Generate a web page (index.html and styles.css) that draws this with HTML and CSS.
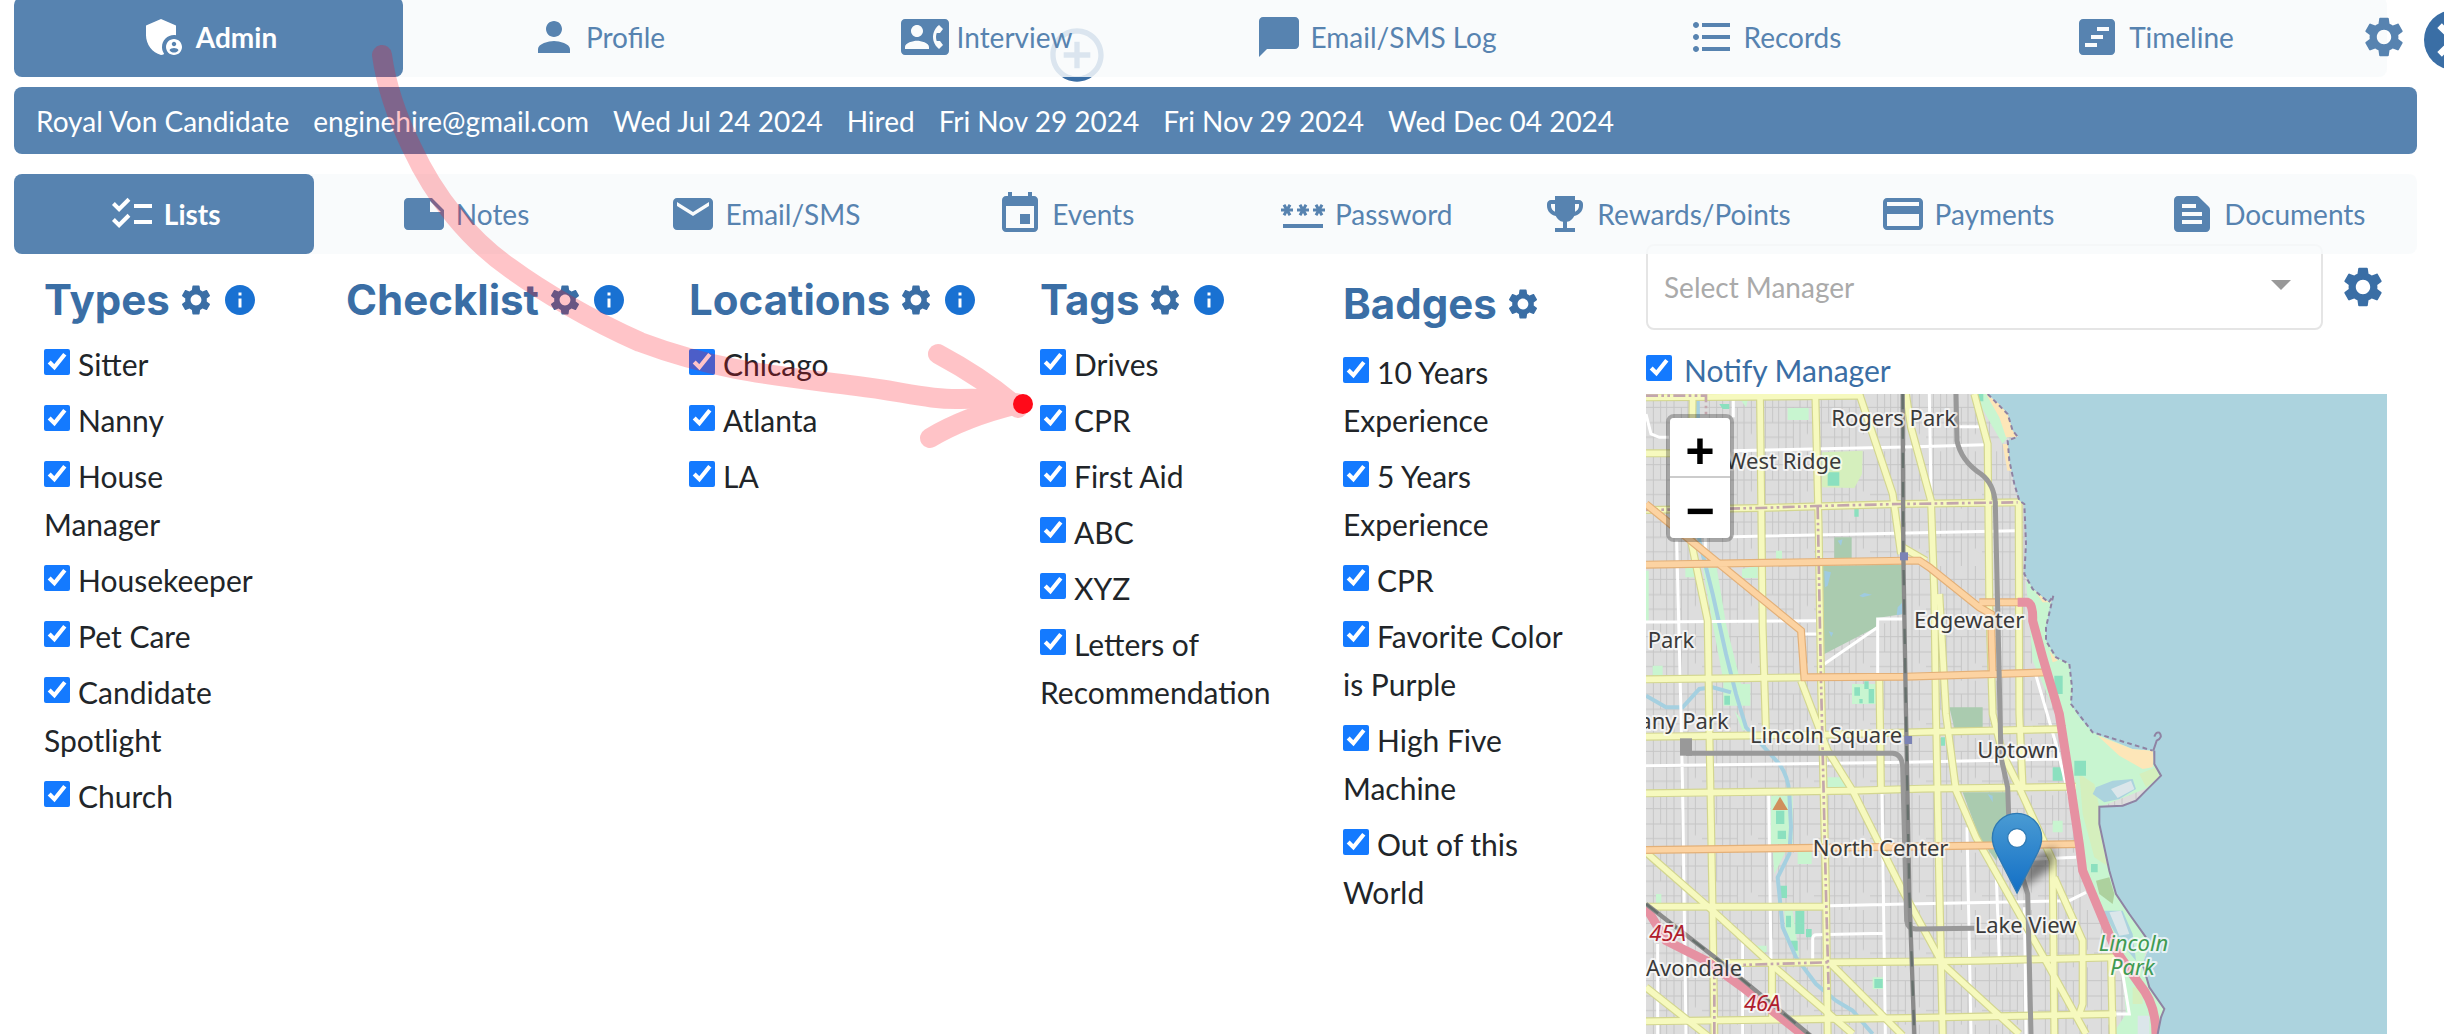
FILE: index.html
```
<!DOCTYPE html>
<html lang="en">
<head>
    <meta charset="UTF-8">
    <meta name="viewport" content="width=device-width, initial-scale=1.0">
    <title>Candidate Admin</title>
    <link rel="stylesheet" href="styles.css">
</head>
<body>
    <!-- icon sprite -->
    <svg class="sprite" aria-hidden="true">
        <symbol id="i-admin" viewBox="0 0 24 24"><path d="M17 11c.34 0 .67.04 1 .09V6.27L10.5 3 3 6.27v4.91c0 4.54 3.2 8.79 7.5 9.82.55-.13 1.08-.32 1.6-.55-.69-.98-1.1-2.17-1.1-3.45 0-3.31 2.69-6 6-6z"/><path d="M17 13c-2.21 0-4 1.79-4 4s1.79 4 4 4 4-1.79 4-4-1.79-4-4-4zm0 1.38c.62 0 1.12.51 1.12 1.12s-.51 1.12-1.12 1.12-1.12-.51-1.12-1.12.5-1.12 1.12-1.12zm0 5.37c-.93 0-1.74-.46-2.24-1.17.05-.72 1.51-1.08 2.24-1.08s2.19.36 2.24 1.08c-.5.71-1.31 1.17-2.24 1.17z"/></symbol>
        <symbol id="i-person" viewBox="0 0 24 24"><path d="M12 12c2.21 0 4-1.79 4-4s-1.79-4-4-4-4 1.79-4 4 1.79 4 4 4zm0 2c-2.67 0-8 1.34-8 4v2h16v-2c0-2.66-5.33-4-8-4z"/></symbol>
        <symbol id="i-contact" viewBox="0 0 24 24"><path d="M22 3H2C.9 3 0 3.9 0 5v14c0 1.1.9 2 2 2h20c1.1 0 1.99-.9 1.99-2L24 5c0-1.1-.9-2-2-2zM8 6c1.66 0 3 1.34 3 3s-1.34 3-3 3-3-1.34-3-3 1.34-3 3-3zm6 12H2v-1c0-2 4-3.1 6-3.1s6 1.1 6 3.1v1zm3.85-4h1.64L21 16l-1.99 1.99c-1.31-.98-2.28-2.38-2.73-3.99-.18-.64-.28-1.31-.28-2s.1-1.36.28-2c.45-1.62 1.42-3.01 2.73-3.99L21 8l-1.51 2h-1.64c-.22.63-.35 1.3-.35 2s.13 1.37.35 2z"/></symbol>
        <symbol id="i-chat" viewBox="0 0 24 24"><path d="M20 2H4c-1.1 0-2 .9-2 2v18l4-4h14c1.1 0 2-.9 2-2V4c0-1.1-.9-2-2-2z"/></symbol>
        <symbol id="i-records" viewBox="0 0 24 24"><path d="M4 10.5c-.83 0-1.5.67-1.5 1.5s.67 1.5 1.5 1.5 1.5-.67 1.5-1.5-.67-1.5-1.5-1.5zm0-6c-.83 0-1.5.67-1.5 1.5S3.17 7.5 4 7.5 5.5 6.83 5.5 6 4.83 4.5 4 4.5zm0 12c-.83 0-1.5.68-1.5 1.5s.68 1.5 1.5 1.5 1.5-.68 1.5-1.5-.67-1.5-1.5-1.5zM7 19h14v-2H7v2zm0-6h14v-2H7v2zm0-8v2h14V5H7z"/></symbol>
        <symbol id="i-timeline" viewBox="0 0 24 24"><path d="M19 3H5c-1.1 0-2 .9-2 2v14c0 1.1.9 2 2 2h14c1.1 0 2-.9 2-2V5c0-1.1-.9-2-2-2zm-7 14H6v-2h6v2zm3-4H9v-2h6v2zm3-4h-6V7h6v2z"/></symbol>
        <symbol id="i-gear" viewBox="0 0 24 24"><path d="M19.14 12.94c.04-.3.06-.61.06-.94 0-.32-.02-.64-.07-.94l2.03-1.58c.18-.14.23-.41.12-.61l-1.92-3.32c-.12-.22-.37-.29-.59-.22l-2.39.96c-.5-.38-1.03-.7-1.62-.94l-.36-2.54c-.04-.24-.24-.41-.48-.41h-3.84c-.24 0-.43.17-.47.41l-.36 2.54c-.59.24-1.13.57-1.62.94l-2.39-.96c-.22-.08-.47 0-.59.22L2.74 8.87c-.12.21-.08.47.12.61l2.03 1.58c-.05.3-.09.63-.09.94s.02.64.07.94l-2.03 1.58c-.18.14-.23.41-.12.61l1.92 3.32c.12.22.37.29.59.22l2.39-.96c.5.38 1.03.7 1.62.94l.36 2.54c.05.24.24.41.48.41h3.84c.24 0 .44-.17.47-.41l.36-2.54c.59-.24 1.13-.56 1.62-.94l2.39.96c.22.08.47 0 .59-.22l1.92-3.32c.12-.22.07-.47-.12-.61l-2.01-1.58zM12 15.6c-1.98 0-3.6-1.62-3.6-3.6s1.62-3.6 3.6-3.6 3.6 1.62 3.6 3.6-1.62 3.6-3.6 3.6z"/></symbol>
        <symbol id="i-checklist" viewBox="0 0 24 24"><path d="M22 7h-9v2h9V7zm0 8h-9v2h9v-2zM5.54 11 2 7.46l1.41-1.41 2.12 2.12 4.24-4.24 1.41 1.41L5.54 11zm0 8L2 15.46l1.41-1.41 2.12 2.12 4.24-4.24 1.41 1.41L5.54 19z"/></symbol>
        <symbol id="i-note" viewBox="0 0 24 24"><path d="M22 10l-6-6H4c-1.1 0-2 .9-2 2v12.01c0 1.1.9 1.99 2 1.99l16-.01c1.1 0 2-.89 2-1.99v-8zm-7-4.5l5.5 5.5H15V5.5z"/></symbol>
        <symbol id="i-email" viewBox="0 0 24 24"><path d="M20 4H4c-1.1 0-1.99.9-1.99 2L2 18c0 1.1.9 2 2 2h16c1.1 0 2-.9 2-2V6c0-1.1-.9-2-2-2zm0 4l-8 5-8-5V6l8 5 8-5v2z"/></symbol>
        <symbol id="i-event" viewBox="0 0 24 24"><path d="M17 12h-5v5h5v-5zM16 1v2H8V1H6v2H5c-1.11 0-1.99.9-1.99 2L3 19c0 1.1.89 2 2 2h14c1.1 0 2-.9 2-2V5c0-1.1-.9-2-2-2h-1V1h-2zm3 18H5V8h14v11z"/></symbol>
        <symbol id="i-password" viewBox="0 0 24 24"><path d="M2 17h20v2H2v-2zm1.15-4.05L4 11.47l.85 1.48 1.3-.75-.85-1.48H7v-1.5H5.3l.85-1.47L4.85 7 4 8.47 3.15 7l-1.3.75.85 1.47H1v1.5h1.7l-.85 1.48 1.3.75zm6.7-.75 1.3.75.85-1.48.85 1.48 1.3-.75-.85-1.48H15v-1.5h-1.7l.85-1.47-1.3-.75L12 8.47 11.15 7l-1.3.75.85 1.47H9v1.5h1.7l-.85 1.48zM23 9.22h-1.7l.85-1.47-1.3-.75L20 8.47 19.15 7l-1.3.75.85 1.47H17v1.5h1.7l-.85 1.48 1.3.75.85-1.48.85 1.48 1.3-.75-.85-1.48H23v-1.5z"/></symbol>
        <symbol id="i-trophy" viewBox="0 0 24 24"><path d="M19 5h-2V3H7v2H5c-1.1 0-2 .9-2 2v1c0 2.55 1.92 4.63 4.39 4.94.63 1.5 1.98 2.63 3.61 2.96V19H7v2h10v-2h-4v-3.1c1.63-.33 2.98-1.46 3.61-2.96C19.08 12.63 21 10.55 21 8V7c0-1.1-.9-2-2-2zM5 8V7h2v3.82C5.84 10.4 5 9.3 5 8zm14 0c0 1.3-.84 2.4-2 2.82V7h2v1z"/></symbol>
        <symbol id="i-card" viewBox="0 0 24 24"><path d="M20 4H4c-1.11 0-1.99.89-1.99 2L2 18c0 1.11.89 2 2 2h16c1.11 0 2-.89 2-2V6c0-1.11-.89-2-2-2zm0 14H4v-6h16v6zm0-10H4V6h16v2z"/></symbol>
        <symbol id="i-document" viewBox="0 0 24 24"><path d="M20.41 8.41l-4.83-4.83c-.37-.37-.88-.58-1.41-.58H5c-1.1 0-2 .9-2 2v14c0 1.1.9 2 2 2h14c1.1 0 2-.9 2-2V9.83c0-.53-.21-1.04-.59-1.42zM7 7h7v2H7V7zm10 10H7v-2h10v2zm0-4H7v-2h10v2z"/></symbol>
        <symbol id="i-info" viewBox="0 0 24 24"><path d="M12 2C6.48 2 2 6.48 2 12s4.48 10 10 10 10-4.48 10-10S17.52 2 12 2zm1 15h-2v-6h2v6zm0-8h-2V7h2v2z"/></symbol>
        <symbol id="i-add" viewBox="0 0 24 24"><path d="M13 7h-2v4H7v2h4v4h2v-4h4v-2h-4V7zm-1-5C6.48 2 2 6.48 2 12s4.48 10 10 10 10-4.48 10-10S17.52 2 12 2zm0 18c-4.41 0-8-3.59-8-8s3.59-8 8-8 8 3.59 8 8-3.59 8-8 8z"/></symbol>
        <symbol id="i-close" viewBox="0 0 24 24"><path d="M19 6.41 17.59 5 12 10.59 6.41 5 5 6.41 10.59 12 5 17.59 6.41 19 12 13.41 17.59 19 19 17.59 13.41 12z"/></symbol>
    </svg>

    <button class="add-btn" type="button" aria-label="Add"><svg><use href="#i-add"/></svg></button>
    <button class="close-btn" type="button" aria-label="Close"><svg><use href="#i-close"/></svg></button>

    <header class="top">
        <nav class="tabs main-tabs" aria-label="Main">
            <a class="tab active" href="#"><svg class="icon"><use href="#i-admin"/></svg>Admin</a>
            <a class="tab" href="#"><svg class="icon"><use href="#i-person"/></svg>Profile</a>
            <a class="tab" href="#"><svg class="icon"><use href="#i-contact"/></svg>Interview</a>
            <a class="tab" href="#"><svg class="icon"><use href="#i-chat"/></svg>Email/SMS Log</a>
            <a class="tab" href="#"><svg class="icon"><use href="#i-records"/></svg>Records</a>
            <a class="tab" href="#"><svg class="icon"><use href="#i-timeline"/></svg>Timeline</a>
            <button class="tabs-gear" type="button" aria-label="Tab settings"><svg class="icon"><use href="#i-gear"/></svg></button>
        </nav>

        <div class="candidate-bar">
            <span>Royal Von Candidate</span>
            <span>enginehire@gmail.com</span>
            <span>Wed Jul 24 2024</span>
            <span>Hired</span>
            <span>Fri Nov 29 2024</span>
            <span>Fri Nov 29 2024</span>
            <span>Wed Dec 04 2024</span>
        </div>

        <nav class="tabs sub-tabs" aria-label="Admin sections">
            <a class="tab active" href="#"><svg class="icon"><use href="#i-checklist"/></svg>Lists</a>
            <a class="tab" href="#"><svg class="icon"><use href="#i-note"/></svg>Notes</a>
            <a class="tab" href="#"><svg class="icon"><use href="#i-email"/></svg>Email/SMS</a>
            <a class="tab" href="#"><svg class="icon"><use href="#i-event"/></svg>Events</a>
            <a class="tab" href="#"><svg class="icon"><use href="#i-password"/></svg>Password</a>
            <a class="tab" href="#"><svg class="icon"><use href="#i-trophy"/></svg>Rewards/Points</a>
            <a class="tab" href="#"><svg class="icon"><use href="#i-card"/></svg>Payments</a>
            <a class="tab" href="#"><svg class="icon"><use href="#i-document"/></svg>Documents</a>
        </nav>
    </header>

    <main class="content">
        <section class="list">
            <h2>Types <svg class="icon-sm"><use href="#i-gear"/></svg><svg class="icon-sm info"><use href="#i-info"/></svg></h2>
            <label><input type="checkbox" checked>Sitter</label>
            <label><input type="checkbox" checked>Nanny</label>
            <label><input type="checkbox" checked>House Manager</label>
            <label><input type="checkbox" checked>Housekeeper</label>
            <label><input type="checkbox" checked>Pet Care</label>
            <label><input type="checkbox" checked>Candidate Spotlight</label>
            <label><input type="checkbox" checked>Church</label>
        </section>

        <section class="list">
            <h2>Checklist <svg class="icon-sm"><use href="#i-gear"/></svg><svg class="icon-sm info"><use href="#i-info"/></svg></h2>
        </section>

        <section class="list">
            <h2>Locations <svg class="icon-sm"><use href="#i-gear"/></svg><svg class="icon-sm info"><use href="#i-info"/></svg></h2>
            <label><input type="checkbox" checked>Chicago</label>
            <label><input type="checkbox" checked>Atlanta</label>
            <label><input type="checkbox" checked>LA</label>
        </section>

        <section class="list">
            <h2>Tags <svg class="icon-sm"><use href="#i-gear"/></svg><svg class="icon-sm info"><use href="#i-info"/></svg></h2>
            <label><input type="checkbox" checked>Drives</label>
            <label><input type="checkbox" checked>CPR</label>
            <label><input type="checkbox" checked>First Aid</label>
            <label><input type="checkbox" checked>ABC</label>
            <label><input type="checkbox" checked>XYZ</label>
            <label><input type="checkbox" checked>Letters of Recommendation</label>
        </section>

        <section class="list badges">
            <h2>Badges <svg class="icon-sm"><use href="#i-gear"/></svg></h2>
            <label><input type="checkbox" checked>10 Years Experience</label>
            <label><input type="checkbox" checked>5 Years Experience</label>
            <label><input type="checkbox" checked>CPR</label>
            <label><input type="checkbox" checked>Favorite Color is Purple</label>
            <label><input type="checkbox" checked>High Five Machine</label>
            <label><input type="checkbox" checked>Out of this World</label>
        </section>

        <section class="manager">
            <div class="manager-row">
                <div class="select-wrap">
                    <select aria-label="Select Manager">
                        <option>Select Manager</option>
                    </select>
                </div>
                <button class="gear-btn" type="button" aria-label="Manager settings"><svg class="icon"><use href="#i-gear"/></svg></button>
            </div>
            <label class="notify"><input type="checkbox" checked>Notify Manager</label>

            <div class="map">
                <svg class="map-tiles" viewBox="0 0 2223 1920" preserveAspectRatio="xMinYMin slice" role="img" aria-label="Map of Chicago, north side">
                    <defs>
                        <pattern id="blocks" width="168" height="172" patternUnits="userSpaceOnUse">
                            <path class="street" d="M22 0V172M44 0V86M62 0V172M84 0V172M106 40V172M126 0V172M148 0V120M0 40H168M0 86H168M0 130H106"/>
                        </pattern>
                        <clipPath id="land-clip">
                            <path id="land" d="M0 0H1025L1060 30 1085 60 1100 110 1115 128 1085 140 1090 200 1105 270 1120 320 1135 330 1137 400 1140 450 1135 540 1160 585 1208 625 1222 605 1212 640 1200 700 1200 740 1230 790 1270 810 1278 880 1275 930 1300 970 1340 1015 1400 1040 1460 1065 1520 1070 1525 1110 1545 1145 1500 1190 1470 1220 1430 1235 1390 1240 1360 1235 1360 1290 1370 1350 1390 1430 1410 1500 1450 1560 1500 1630 1510 1660 1490 1710 1510 1780 1555 1845 1545 1870 1535 1920H0Z"/>
                        </clipPath>
                        <g id="secondary">
                            <path d="M0 10 330 8 640 5M0 178H75M0 348 340 342 760 330 1125 325M0 856 480 850M0 1028 540 1022 830 1014 1260 1005M0 1198 620 1190 830 1184 1290 1178M0 1538H540M200 1708 780 1703 1000 1700 1410 1690M0 1882 780 1872 1410 1860"/>
                            <path d="M140 0 135 440 185 680 190 1000 200 1560 205 1920M342 0 350 700 360 1020M508 0 518 400 525 860 540 1500 545 1920M640 0 740 300 765 480M780 0 795 100 855 320 865 600 870 960 880 1480 890 1920M770 460 840 500M700 850 705 1190M378 1710V1880"/>
                            <path d="M985 0 1025 150 1030 640 1040 960 1070 1080 1110 1160 1220 1400 1225 1920M1118 325 1120 960 1130 1180M880 600 900 960 930 1190 990 1330 1210 1720 1320 1920M1225 1450 1310 1640V1830L1300 1860M1395 1690 1400 1920"/>
                            <path d="M465 860 545 1070 620 1190 770 1490 890 1710 1120 1920M0 1375 200 1550 380 1715 620 1920M0 1780 190 1930M550 1705 770 1925"/>
                        </g>
                        <g id="primary">
                            <path d="M0 512 780 500H820L850 520 1000 640 1035 660 1040 840M0 330 465 710 475 850 780 848 1210 835M1000 625H1120M0 1368 450 1362 780 1358 1310 1350"/>
                        </g>
                        <g id="rail">
                            <path d="M770 0 772 480 780 960 790 1500 805 1920M0 1530 220 1700 500 1930"/>
                        </g>
                        <linearGradient id="pin" x1="0" y1="0" x2="0" y2="1">
                            <stop offset="0" stop-color="#4a9bd3"/>
                            <stop offset="1" stop-color="#126fc6"/>
                        </linearGradient>
                        <filter id="soft" x="-50%" y="-50%" width="200%" height="200%"><feGaussianBlur stdDeviation="12"/></filter>
                    </defs>

                    <rect class="water" width="2223" height="1920"/>
                    <g clip-path="url(#land-clip)">
                        <use class="ground" href="#land"/>
                        <rect width="2223" height="1920" fill="url(#blocks)"/>

                        <!-- parks, cemeteries, beaches -->
                        <path class="grass" d="M170 520H212L240 690 285 870H313V935H232V860L200 690ZM425 42H488V78H425ZM288 525 335 515V552H288ZM375 1205H440V1350H375ZM380 1365 420 1370 385 1440ZM545 1150H600V1182H545ZM455 1372H497V1410H455ZM415 1550H440L460 1690 420 1640ZM618 870H690V930H618ZM118 520H145V550H118ZM390 470H408V495H390ZM330 1655H362V1675H330ZM265 -10 310 0 300 40ZM0 530H8V680H0ZM680 1750H712V1785H680ZM20 815H50V845H20ZM30 1500H46V1528H30ZM265 950 310 1005 290 1010ZM1220 1280H1250V1315H1220Z"/>
                        <path class="grass" d="M985 0H1030L1085 130 1070 150 1035 90ZM1140 560 1215 625 1200 700 1230 790 1270 810 1340 1015 1560 1060 1560 1160 1360 1240 1390 1430 1510 1630 1490 1710 1570 1850 1540 1920H1400L1440 1860 1430 1740 1380 1600 1310 1440 1280 1200 1230 960 1160 800Z"/>
                        <path class="meadow" d="M528 175 650 170 648 240 625 282 528 280ZM1300 1140 1345 1170 1360 1240 1390 1420 1345 1390 1310 1260ZM1460 1780H1490V1830H1460ZM1480 1140 1530 1120 1540 1150 1500 1180Z"/>
                        <path class="cemetery" d="M530 515 770 512V660L695 672 690 700 535 780ZM565 430H617V492H565ZM910 940H1010V1002H925ZM950 1195H1080L1085 1300 1050 1400 1000 1330Z"/>
                        <path class="wood" d="M1350 1460 1390 1450 1405 1500 1400 1530 1360 1500Z"/>
                        <path class="pitch" d="M545 235H580V275H545ZM625 345H638V368H625ZM625 880H642V905H625ZM655 862H668V885H655ZM640 915H650V928H640ZM668 885H684V928H668ZM400 1475H423V1512H400ZM448 1550H475V1620H448ZM420 1565H435V1600H420ZM480 1605H497V1630H480ZM435 1640H455V1670H435ZM390 1250H415V1290H390ZM395 1310H420V1335H395ZM685 1755H710V1782H685ZM235 905H252V932H235ZM220 30H250V45H230ZM1285 1100H1320V1145H1285ZM1220 1120H1250V1160H1220ZM995 0H1012V22H995ZM1225 845H1250V900H1225ZM885 1030H897V1055H885ZM1335 1410H1355V1435H1335Z"/>
                        <path class="sand" d="M1020 0 1060 30 1085 60 1118 128 1080 130 1060 70ZM1070 150H1090L1098 230H1084ZM1135 545 1215 625 1190 625ZM1210 770 1235 800 1220 805ZM1355 1025 1460 1065 1525 1070 1520 1120 1490 1125 1420 1085Z"/>
                        <path class="lagoon" d="M1350 1180 1400 1160 1460 1155 1470 1185 1420 1215 1375 1225 1340 1200ZM1370 1550 1430 1550 1460 1620 1470 1700 1420 1640Z"/>
                        <path class="harbor" d="M1395 1185 1455 1160 1465 1185 1415 1212ZM1390 1555 1425 1550 1450 1620 1420 1625ZM1475 1865H1510V1920H1475Z"/>

                        <path class="river" d="M155 0 160 440 200 600 240 780 270 900 300 1000 400 1110Q428 1150 430 1200L435 1300 430 1380 395 1450 410 1600 450 1690 510 1770 570 1820 620 1850 680 1920M0 905 60 940H110L160 885 200 880 255 895"/>
                        <path class="pond" d="M640 605 655 597 678 602 650 610ZM755 640 770 625V660L752 664ZM548 712 562 716 556 728ZM535 530 555 535 545 575 537 580ZM575 440 590 436 585 455ZM1025 1200 1040 1205 1040 1225Z"/>

                        <path class="tertiary" d="M260 170 810 158 1015 152M260 428 1110 410M0 684 520 680M470 720H520M92 440 105 960 110 1200 120 1920M262 0V70M178 430V465M0 60 15 120 40 130H70M535 810 695 700V675H770M695 700V850M0 1115 780 1105 1240 1095M368 1200 375 1710M708 1200 718 1920M963 1300 975 1920M1050 1420 1060 1700M1135 1540 1140 1920M550 1535 780 1530 1270 1520 1320 1495M500 1700V1635Q500 1622 512 1622L710 1618M35 1650V1920M290 1640V1920M850 0 855 300M1170 845 1230 1050 1280 1250M1160 1396 1290 1390M1410 1700 1430 1740 1450 1860H1400M940 98H1000"/>
                        <use class="secondary-casing" href="#secondary"/>
                        <use class="secondary-fill" href="#secondary"/>
                        <path class="boundary" d="M0 5H180V65M0 348 340 342 510 336 760 330 1115 325M515 340 525 860 540 1500 548 1790M205 1920V1715L545 1705"/>
                        <use class="primary-casing" href="#primary"/>
                        <use class="primary-fill" href="#primary"/>
                        <path class="metro" d="M930 0 933 140Q945 200 1005 240 1045 270 1048 330L1055 640 1065 1090 1085 1180 1090 1320 1145 1500 1155 1920M120 1078H740Q768 1080 770 1120L782 1580Q785 1605 810 1605L985 1603"/>
                        <rect class="metro-end" x="102" y="1033" width="36" height="52"/>
                        <path class="trunk" d="M1115 625H1145Q1162 630 1160 680L1190 790 1240 960 1270 1150 1300 1350 1310 1430 1410 1670 1480 1770Q1530 1830 1530 1920M0 1540 60 1640 180 1700 290 1780 480 1930"/>
                        <use class="rail-line" href="#rail"/>
                        <use class="rail-dash" href="#rail"/>
                        <rect class="station" x="762" y="475" width="24" height="24"/>
                        <rect class="station" x="776" y="1026" width="22" height="24"/>
                    </g>
                    <path class="coast" d="M1025 0 1085 60 1100 110 1115 128 1085 140 1090 200 1105 270 1120 320 1135 330 1140 450 1135 540 1160 585 1208 625 1222 605 1200 700 1200 740 1230 790 1270 810 1278 880 1275 930 1340 1015 1520 1070"/>
                    <path class="shore" d="M1522 1070 1532 1040Q1552 1030 1540 1016 1530 1012 1525 1028M1525 1070 1525 1110 1545 1145 1500 1190 1470 1220 1430 1235 1360 1238 1360 1290 1390 1430 1410 1500 1450 1560 1500 1630M1490 1710 1510 1780 1555 1845 1545 1870 1535 1920"/>
                    <path class="peak" d="M402 1208 426 1248H379Z"/>

                    <g class="place">
                        <text x="556" y="96">Rogers Park</text>
                        <text x="240" y="226">West Ridge</text>
                        <text x="804" y="702">Edgewater</text>
                        <text x="5" y="762">Park</text>
                        <text x="-20" y="1006">any Park</text>
                        <text x="312" y="1048">Lincoln Square</text>
                        <text x="994" y="1092">Uptown</text>
                        <text x="500" y="1386">North Center</text>
                        <text x="986" y="1618">Lake View</text>
                        <text x="0" y="1746">Avondale</text>
                    </g>
                    <g class="route">
                        <text x="10" y="1642">45A</text>
                        <text x="294" y="1850">46A</text>
                    </g>
                    <g class="park-name">
                        <text x="1358" y="1672">Lincoln</text>
                        <text x="1392" y="1744">Park</text>
                    </g>

                    <path class="pin-shadow" filter="url(#soft)" d="M1120 1490 1150 1390 1230 1360 1220 1420Z"/>
                    <path class="pin" d="M1113 1497 1050 1374Q1039 1350 1039 1332A74 74 0 0 1 1187 1332Q1187 1350 1176 1374Z"/>
                    <circle class="pin-hole" cx="1113" cy="1332" r="28"/>
                </svg>
                <div class="zoom-control">
                    <button type="button" aria-label="Zoom in">+</button>
                    <button type="button" aria-label="Zoom out">−</button>
                </div>
            </div>
        </section>
    </main>

    <!-- hand drawn pointer -->
    <svg class="annotation" aria-hidden="true">
        <g class="arrow">
            <path d="M382 55C386 85 396 115 412 148 435 198 470 240 510 268 540 290 590 320 640 342 720 372 780 376 857 386 900 391 930 400 960 399 985 398 1000 400 1020 404"/>
            <path d="M938 354C968 370 995 388 1018 408"/>
            <path d="M930 438C955 423 985 412 1018 404"/>
        </g>
        <circle class="arrow-tip" cx="1023" cy="404" r="10"/>
    </svg>
</body>
</html>
```
FILE: styles.css
```
* {
    box-sizing: border-box;
}

body {
    margin: 0;
    font-family: Lato, "Open Sans", sans-serif;
    font-size: 30px;
    line-height: 48px;
    color: #212529;
    background-color: #fff;
    position: relative;
    overflow-x: hidden;
}

button {
    padding: 0;
    border: 0;
    background: none;
    color: inherit;
    font: inherit;
    cursor: pointer;
}

svg {
    display: block;
    fill: currentColor;
}

.sprite {
    position: absolute;
    width: 0;
    height: 0;
}

.icon {
    width: 48px;
    height: 48px;
    flex: none;
}

.icon-sm {
    width: 36px;
    height: 36px;
    flex: none;
}

.info { color: #1971d2; }

/* header */
.top {
    position: relative;
    z-index: 2;
    font-size: 28px;
}

.tabs {
    display: flex;
    height: 80px;
    margin: 0 27px 0 14px;
    border-radius: 8px;
    background-color: rgba(248, 250, 252, 0.85);
    color: #5783b0;
}

.main-tabs {
    margin-top: -3px;
    margin-right: 57px;
}

.tab {
    flex: 1 1 0;
    display: flex;
    align-items: center;
    justify-content: center;
    gap: 8px;
    border-radius: 8px;
    color: inherit;
    text-decoration: none;
    white-space: nowrap;
}

.tab.active {
    background-color: #5783b0;
    color: #fff;
    font-weight: bold;
}

.tabs-gear {
    width: 39px;
    display: flex;
    align-items: center;
    padding-left: 12px;
}

.candidate-bar {
    display: flex;
    align-items: center;
    gap: 24px;
    height: 67px;
    margin: 10px 27px 20px 14px;
    padding: 0 22px;
    border-radius: 8px;
    background-color: #5783b0;
    color: #fff;
}

/* floating buttons */
.add-btn {
    position: absolute;
    top: 23px;
    left: 1045px;
    color: #3a6ea5;
}

.add-btn svg {
    width: 64px;
    height: 64px;
}

.close-btn {
    position: absolute;
    top: 10px;
    right: -40px;
    z-index: 3;
    width: 60px;
    height: 60px;
    padding: 4px;
    border-radius: 50%;
    background-color: #3a6ea5;
    color: #fff;
}

.close-btn svg {
    width: 52px;
    height: 52px;
    stroke: currentColor;
}

/* columns */
.content {
    display: grid;
    grid-template-columns:
        minmax(0, 302fr) minmax(0, 343fr) minmax(0, 351fr)
        minmax(0, 303fr) minmax(0, 303fr) minmax(0, 741fr);
    margin: -10px 57px 0 44px;
}

.list {
    padding: 32px 66px 0 0;
}

.list h2 {
    display: flex;
    align-items: center;
    gap: 8px;
    margin: 0 0 16px;
    font-family: Inter, "Open Sans", sans-serif;
    font-size: 42px;
    font-weight: bold;
    line-height: 48px;
    color: #3a6ea5;
    white-space: nowrap;
}

.list.badges h2 { line-height: 56px; }

.list label {
    display: block;
    margin-bottom: 8px;
}

input[type="checkbox"] {
    width: 26px;
    height: 26px;
    margin: 0 8px 0 0;
    vertical-align: 1px;
    accent-color: #147aff;
}

/* manager + map */
.manager-row {
    display: flex;
    align-items: center;
    gap: 16px;
}

.select-wrap {
    flex: 1;
    position: relative;
}

.select-wrap::after {
    content: "";
    position: absolute;
    top: 36px;
    right: 32px;
    border: 10px solid transparent;
    border-top-color: #999;
    border-bottom: 0;
    pointer-events: none;
}

.select-wrap select {
    display: block;
    width: 100%;
    height: 86px;
    padding: 0 16px;
    border: 2px solid #e5e5e5;
    border-radius: 8px;
    background-color: #fff;
    color: #aaa;
    font: inherit;
    font-size: 28px;
    appearance: none;
}

.gear-btn { color: #3a6ea5; }

.notify {
    display: block;
    margin-top: 16px;
    color: #3a6ea5;
}

.notify input[type="checkbox"] { margin-right: 12px; }

.map {
    position: relative;
    height: 640px;
    overflow: hidden;
}

.map-tiles {
    width: 100%;
    height: 100%;
    fill: none;
}

.water { fill: #acd3de; }
.ground { fill: #dddddd; }
.street { stroke: #c6c6c6; stroke-width: 3; }
.grass { fill: #c8f5d0; }
.meadow { fill: #d5efbd; }
.cemetery { fill: #aacbaf; }
.wood { fill: #add19e; }
.pitch { fill: #8be0bf; }
.sand { fill: #fde6b8; }
.lagoon { fill: #acd3de; }
.harbor { fill: #dbe6ea; }
.river { stroke: #a5d0e0; stroke-width: 12; }
.pond { fill: #9fcbe0; }

.tertiary { stroke: #fff; stroke-width: 9; }
.secondary-casing { stroke: #d3d690; stroke-width: 24; }
.secondary-fill { stroke: #f6f9be; stroke-width: 17; }
.primary-casing { stroke: #e3b078; stroke-width: 24; }
.primary-fill { stroke: #fcd3a2; stroke-width: 17; }
.boundary { stroke: #c3a6ad; stroke-width: 8; stroke-dasharray: 36 10 8 10 8 10; }
.trunk { stroke: #e691a2; stroke-width: 27; }
.metro { stroke: #999; stroke-width: 15; }
.metro-end { fill: #999; }
.rail-line { stroke: #8b8b8b; stroke-width: 13; }
.rail-dash { stroke: #66706c; stroke-width: 7; stroke-dasharray: 46 42; }
.station { fill: #7b83b5; }
.coast { stroke: #8f83a3; stroke-width: 6; stroke-dasharray: 14 10; }
.shore { stroke: #8f83a3; stroke-width: 6; }
.peak { fill: #d08f5c; }

.map-tiles text {
    font-family: "Noto Sans", sans-serif;
    font-size: 66px;
    stroke: rgba(255, 255, 255, 0.7);
    stroke-width: 12px;
    stroke-linejoin: round;
    paint-order: stroke;
}

.place { fill: #3a3a3a; }
.route { fill: #b01c2c; font-style: italic; }
.park-name { fill: #3f9b52; font-style: italic; }

.pin { fill: url(#pin); stroke: #2e79b3; stroke-width: 4; }
.pin-hole { fill: #fff; stroke: #2e79b3; stroke-width: 4; }
.pin-shadow { fill: rgba(0, 0, 0, 0.45); }

.zoom-control {
    position: absolute;
    top: 20px;
    left: 20px;
    border: 4px solid rgba(0, 0, 0, 0.25);
    border-radius: 8px;
    background-clip: padding-box;
}

.zoom-control button {
    display: block;
    width: 60px;
    height: 60px;
    padding-top: 14px;
    border-radius: 0 0 4px 4px;
    background-color: #fff;
    color: #000;
    font: bold 50px/46px "Liberation Mono", monospace;
}

.zoom-control button:first-child {
    border-bottom: 2px solid #ccc;
    border-radius: 4px 4px 0 0;
}

/* arrow */
.annotation {
    position: absolute;
    top: 0;
    left: 0;
    z-index: 4;
    width: 1100px;
    height: 500px;
    pointer-events: none;
}

.arrow {
    fill: none;
    stroke: #ff0a19;
    stroke-width: 20;
    stroke-linecap: round;
    opacity: 0.24;
}

.arrow-tip { fill: #ff0a19; }
```
